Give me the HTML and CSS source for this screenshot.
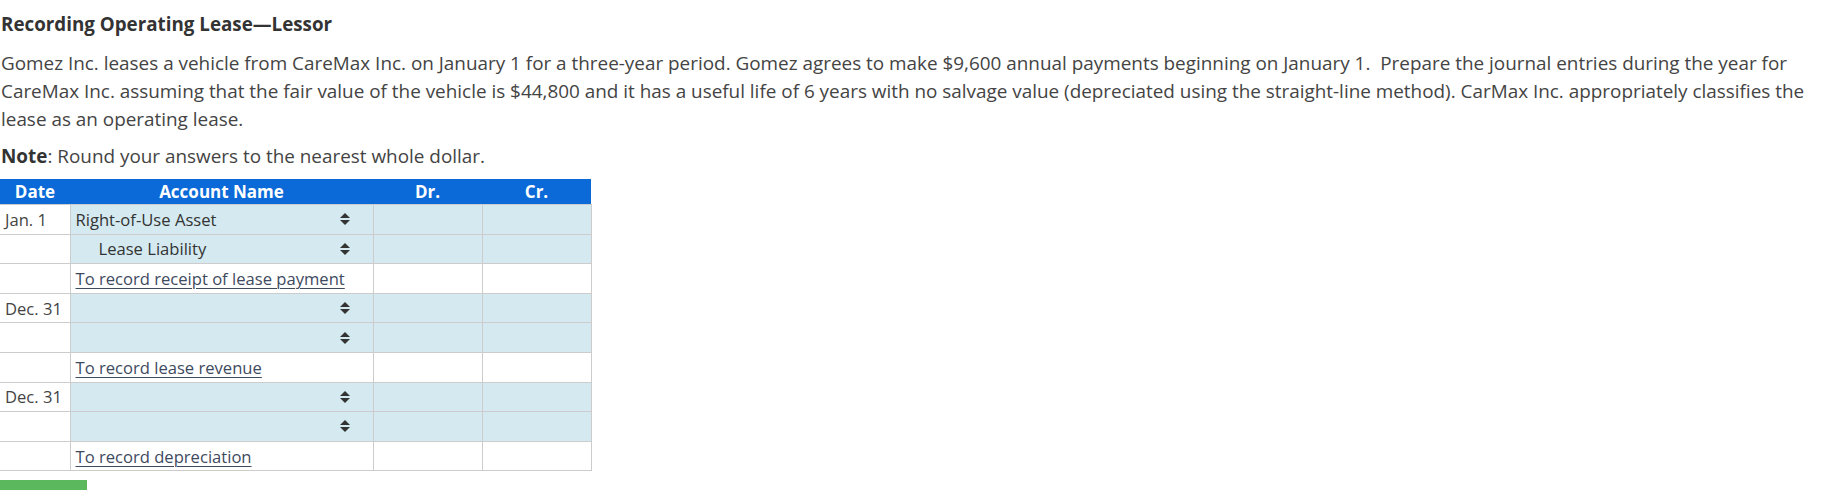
FILE: index.html
```html
<!DOCTYPE html>
<html>
<head>
<meta charset="utf-8">
<link rel="stylesheet" href="styles.css">
</head>
<body>
<div class="page">
  <h2 class="title">Recording Operating Lease—Lessor</h2>
  <p class="para">Gomez Inc. leases a vehicle from CareMax Inc. on January 1 for a three-year period. Gomez agrees to make $9,600 annual payments beginning on January 1.&nbsp; Prepare the journal entries during the year for CareMax Inc. assuming that the fair value of the vehicle is $44,800 and it has a useful life of 6 years with no salvage value (depreciated using the straight-line method). CarMax Inc. appropriately classifies the lease as an operating lease.</p>
  <p class="note"><strong>Note</strong>: Round your answers to the nearest whole dollar.</p>
  <table class="journal">
    <thead>
      <tr><th class="c-date">Date</th><th class="c-acct">Account Name</th><th class="c-dr">Dr.</th><th class="c-cr">Cr.</th></tr>
    </thead>
    <tbody>
      <tr><td class="date">Jan. 1</td><td class="in acct"><div class="sel"><span>Right-of-Use Asset</span><i class="arr"></i></div></td><td class="in"></td><td class="in"></td></tr>
      <tr><td class="date"></td><td class="in acct"><div class="sel"><span class="indent">Lease Liability</span><i class="arr"></i></div></td><td class="in"></td><td class="in"></td></tr>
      <tr><td class="date"></td><td class="memo"><a>To record receipt of lease payment</a></td><td></td><td></td></tr>
      <tr><td class="date">Dec. 31</td><td class="in acct"><div class="sel"><span></span><i class="arr"></i></div></td><td class="in"></td><td class="in"></td></tr>
      <tr><td class="date"></td><td class="in acct"><div class="sel"><span></span><i class="arr"></i></div></td><td class="in"></td><td class="in"></td></tr>
      <tr><td class="date"></td><td class="memo"><a>To record lease revenue</a></td><td></td><td></td></tr>
      <tr><td class="date">Dec. 31</td><td class="in acct"><div class="sel"><span></span><i class="arr"></i></div></td><td class="in"></td><td class="in"></td></tr>
      <tr><td class="date"></td><td class="in acct"><div class="sel"><span></span><i class="arr"></i></div></td><td class="in"></td><td class="in"></td></tr>
      <tr><td class="date"></td><td class="memo"><a>To record depreciation</a></td><td></td><td></td></tr>
    </tbody>
  </table>
  <div class="btnbar"></div>
</div>
</body>
</html>
```
FILE: styles.css
```css
html, body { margin: 0; padding: 0; background: #fff; }
body { font-family: "Open Sans", "Liberation Sans", sans-serif; color: #444; }
.page { padding: 0 0 0 1px; }
.title { margin: 0; padding-top: 12px; font-size: 18.8px; font-weight: 700; line-height: 24px; color: #333; }
.para { margin: 13px 0 0; font-size: 18.9px; line-height: 28px; color: #444; }
.note { margin: 9px 0 0; font-size: 18.9px; line-height: 28px; color: #444; }
.note strong { color: #333; }
.journal { margin-top: 9px; border-collapse: collapse; table-layout: fixed; width: 591px; margin-left: -1px; }
.journal th { background: #0b6ad8; color: #fff; font-size: 17px; font-weight: 700; height: 25px; padding: 0; line-height: 20px; border: 0; }
.c-date { width: 70px; }
.c-acct { width: 303px; }
.c-dr { width: 109px; }
.c-cr { width: 109px; }
.journal td { height: 28.6px; border: 1px solid #ccc; padding: 0; font-size: 16.6px; color: #444; }
.journal tr td:first-child { border-left: 0; }
.journal td.date { text-align: left; padding-left: 5px; white-space: nowrap; }
.journal td.in { background: #d4eaf0; }
.sel { display: flex; align-items: center; justify-content: space-between; padding: 0 23px 0 5px; }
.sel span { color: #333; }
.sel .indent { padding-left: 23px; }
.arr { display: inline-flex; flex-direction: column; align-items: center; width: 10px; height: 12px; }
.arr::before { content: ""; width: 0; height: 0; border-left: 5px solid transparent; border-right: 5px solid transparent; border-bottom: 5px solid #333; }
.arr::after { content: ""; width: 0; height: 0; margin-top: 2px; border-left: 5px solid transparent; border-right: 5px solid transparent; border-top: 5px solid #333; }
.memo { padding-left: 5px !important; }
.memo a { color: #3e4a5e; text-decoration: underline; text-underline-offset: 3px; text-decoration-thickness: 1px; }
.btnbar { margin-top: 9px; width: 87px; height: 12px; background: #5cb85c; margin-left: -1px; }
```
